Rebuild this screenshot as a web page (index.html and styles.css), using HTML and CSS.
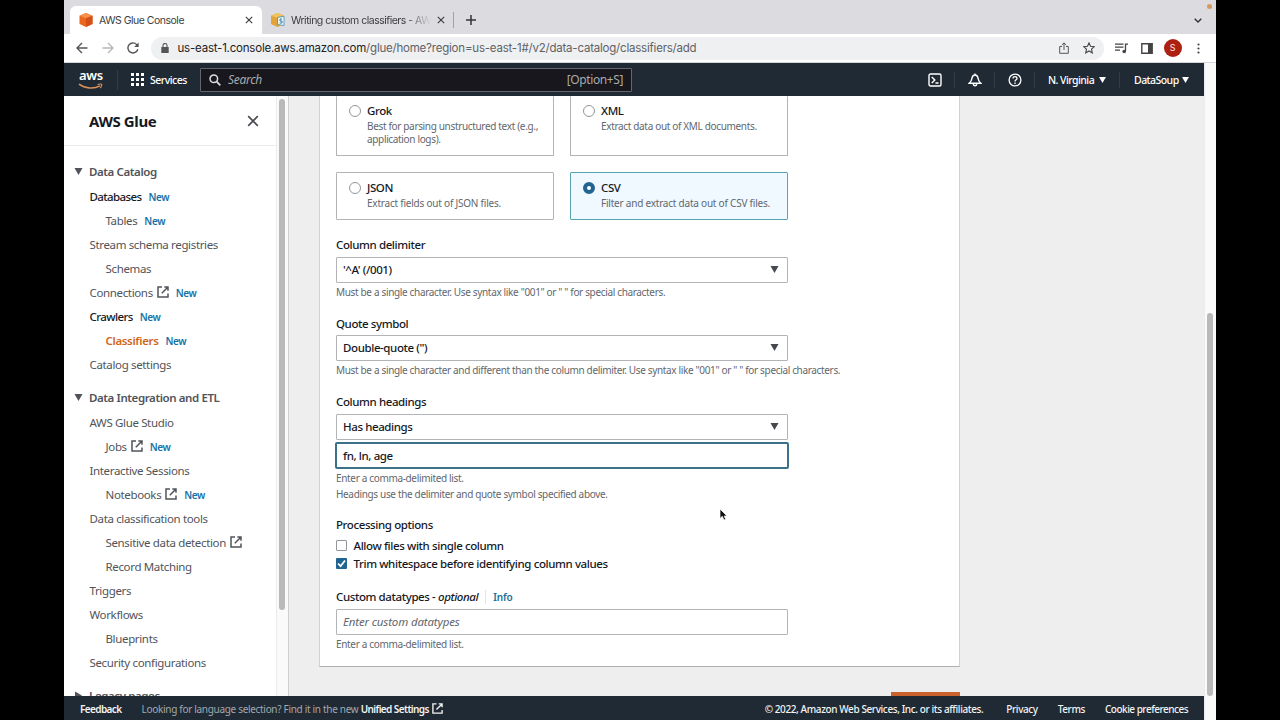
FILE: index.html
```html
<!DOCTYPE html>
<html lang="en">
<head>
    <meta charset="UTF-8">
    <meta name="viewport" content="width=device-width, initial-scale=1.0">
    <title>AWS Glue Console</title>
    <link rel="stylesheet" href="styles.css">
</head>
<body>

    <!-- shared icons -->
    <svg class="icon-defs">
        <symbol id="external" viewBox="0 0 12 12">
            <path d="M5 1H1v10h10V7.500M7.300 1H11v3.700M11 1L4.800 7.200" fill="none" stroke="currentColor" stroke-width="1.500"/>
        </symbol>
        <symbol id="close" viewBox="0 0 10 10">
            <path d="M1 1l8 8M9 1L1 9" fill="none" stroke="currentColor" stroke-width="1.400"/>
        </symbol>
        <symbol id="caret" viewBox="0 0 8 7">
            <path d="M0 0h8L4 7z" fill="currentColor"/>
        </symbol>
    </svg>

    <div class="browser">
        <div class="tab-strip">
            <div class="tab tab-active">
                <svg class="favicon" viewBox="0 0 14 14"><path d="M7 0l6.500 2.800v8.200L7 14 .5 11V2.800z" fill="#e9681d"/><path d="M.5 2.800L7 0l6.500 2.800L7 5.200z" fill="#f6914a"/><path d="M7 5.200l6.500-2.400v8.200L7 14z" fill="#d4501a"/></svg>
                <span class="tab-title">AWS Glue Console</span>
                <svg class="tab-close"><use href="#close"/></svg>
            </div>
            <div class="tab">
                <svg class="favicon" viewBox="0 0 14 14"><path d="M6.500 0L13 2.500v8.500L6.500 14 0 11V2.800z" fill="#e3a338"/><path d="M0 2.800L6.500 0 13 2.500 6.500 5z" fill="#f2c25f"/><path d="M6.500 4.500L13 3.300v9.200l-6.500-1z" fill="#f3f7f8" stroke="#3b8fae" stroke-width=".8"/><path d="M11 6H9v2h2v2H8.600" fill="none" stroke="#2c83aa"/></svg>
                <span class="tab-title fade">Writing custom classifiers - AW</span>
                <svg class="tab-close"><use href="#close"/></svg>
            </div>
            <span class="tab-divider"></span>
            <svg class="new-tab" viewBox="0 0 10 10"><path d="M5 0v10M0 5h10" stroke="#333" stroke-width="1.500"/></svg>
            <svg class="tab-menu" viewBox="0 0 8 5"><path d="M.7.7L4 4 7.300.7" fill="none" stroke="#333" stroke-width="1.400"/></svg>
            <span class="recording-dot"></span>
        </div>

        <div class="toolbar">
            <svg class="nav-icon" viewBox="0 0 12 12"><path d="M11.500 6H1.500M6 1L1 6l5 5" fill="none" stroke="#555" stroke-width="1.400"/></svg>
            <svg class="nav-icon" viewBox="0 0 12 12"><path d="M.5 6h10M6 1l5 5-5 5" fill="none" stroke="#b5b6b8" stroke-width="1.300"/></svg>
            <svg class="nav-icon" viewBox="0 0 12 12"><path d="M10.800 7.200A5 5 0 1 1 9.700 2.600L11 4" fill="none" stroke="#555" stroke-width="1.400"/><path d="M11.600.6v4.400H7.200z" fill="#555"/></svg>
            <div class="address">
                <svg class="lock" viewBox="0 0 8 10"><path d="M.3 4h7.400v6H.3z" fill="#555"/><path d="M2 4V2.500a2 2 0 0 1 4 0V4" fill="none" stroke="#555" stroke-width="1.100"/></svg>
                <span class="url"><b>us-east-1.console.aws.amazon.com</b>/glue/home?region=us-east-1#/v2/data-catalog/classifiers/add</span>
                <svg class="share" viewBox="0 0 10 12"><path d="M3 4.500H.7v6.800h8.600V4.500H7M5 8V1M2.800 3L5 .9 7.200 3" fill="none" stroke="#555"/></svg>
                <svg class="star" viewBox="0 0 12 12"><path d="M6 .9l1.500 3.400 3.800.4-2.800 2.500.8 3.700L6 9l-3.300 1.900.8-3.700L.7 4.700l3.800-.4z" fill="none" stroke="#444" stroke-width="1.100"/></svg>
            </div>
            <svg class="playlist" viewBox="0 0 13 11"><path d="M0 1.200h8.500M0 4.200h8.500M0 7.200h5M10.500 8V1.200H13" fill="none" stroke="#444" stroke-width="1.300"/><circle cx="9.200" cy="8.500" r="1.800" fill="#444"/></svg>
            <svg class="panel-icon" viewBox="0 0 12 11"><path d="M.8.8h10.400v9.400H.8z" fill="none" stroke="#444" stroke-width="1.400"/><path d="M7 1h4v9H7z" fill="#444"/></svg>
            <span class="avatar">S</span>
            <svg class="kebab" viewBox="0 0 3 11"><circle cx="1.500" cy="1.500" r="1.100" fill="#444"/><circle cx="1.500" cy="5.500" r="1.100" fill="#444"/><circle cx="1.500" cy="9.500" r="1.100" fill="#444"/></svg>
        </div>

        <div class="viewport">
            <div class="page">
                <header class="aws-nav">
                    <div class="aws-logo">
                        <span>aws</span>
                        <svg viewBox="0 0 25 7"><path d="M1 1.200C7 5.800 16 6.200 22 2.800" fill="none" stroke="#d9935c" stroke-width="1.500"/><path d="M19.500 1.500c2-.8 4.500-.7 4.300.2s-.6 2.500-1.500 3.500" fill="none" stroke="#d9935c" stroke-width="1.100"/></svg>
                    </div>
                    <div class="services">
                        <svg viewBox="0 0 13 13" fill="#fff"><path d="M0 0h3v3H0zM5 0h3v3H5zM10 0h3v3h-3zM0 5h3v3H0zM5 5h3v3H5zM10 5h3v3h-3zM0 10h3v3H0zM5 10h3v3H5zM10 10h3v3h-3z"/></svg>
                        <span>Services</span>
                    </div>
                    <div class="search">
                        <svg viewBox="0 0 12 12"><circle cx="4.800" cy="4.800" r="3.800" fill="none" stroke="#ddd" stroke-width="1.500"/><path d="M7.700 7.700l3.600 3.600" stroke="#ddd" stroke-width="1.700"/></svg>
                        <i>Search</i>
                        <span>[Option+S]</span>
                    </div>
                    <div class="nav-tools">
                        <div class="tool"><svg viewBox="0 0 14 14" fill="none" stroke="#fff" stroke-width="1.400"><rect x="1" y="1" width="12" height="12" rx="1.500"/><path d="M3.800 4l3 3-3 3M7.500 10h3"/></svg></div>
                        <div class="tool"><svg viewBox="0 0 14 14" fill="none" stroke="#fff" stroke-width="1.400"><path d="M1.200 10.300C3 8.800 3.700 7.500 4 5.200 4.300 3 5.500 2 7 2s2.700 1 3 3.200c.3 2.300 1 3.600 2.800 5.100zM7 2V.5M5.300 10.500c0 3 3.400 3 3.400 0"/></svg></div>
                        <div class="tool"><svg viewBox="0 0 14 14" fill="none" stroke="#fff" stroke-width="1.300"><circle cx="7" cy="7" r="5.900"/><path d="M5 5.600c0-2.700 4-2.500 4-.2C9 6.800 7 6.600 7 8.500M7 9.500v1.400"/></svg></div>
                        <div class="menu region">N. Virginia <svg><use href="#caret"/></svg></div>
                        <div class="menu account">DataSoup <svg><use href="#caret"/></svg></div>
                    </div>
                </header>

                <div class="content">
                    <nav class="sidebar">
                        <div class="sidebar-head">
                            <h2>AWS Glue</h2>
                            <svg><use href="#close"/></svg>
                        </div>
                        <div class="group">
                            <h3><svg><use href="#caret"/></svg>Data Catalog</h3>
                            <a class="strong">Databases <em>New</em></a>
                            <a class="sub">Tables <em>New</em></a>
                            <a>Stream schema registries</a>
                            <a class="sub">Schemas</a>
                            <a>Connections <svg><use href="#external"/></svg> <em>New</em></a>
                            <a class="strong">Crawlers <em>New</em></a>
                            <a class="sub current">Classifiers <em>New</em></a>
                            <a>Catalog settings</a>
                        </div>
                        <div class="group">
                            <h3><svg><use href="#caret"/></svg>Data Integration and ETL</h3>
                            <a>AWS Glue Studio</a>
                            <a class="sub">Jobs <svg><use href="#external"/></svg> <em>New</em></a>
                            <a>Interactive Sessions</a>
                            <a class="sub">Notebooks <svg><use href="#external"/></svg> <em>New</em></a>
                            <a>Data classification tools</a>
                            <a class="sub">Sensitive data detection <svg><use href="#external"/></svg></a>
                            <a class="sub">Record Matching</a>
                            <a>Triggers</a>
                            <a>Workflows</a>
                            <a class="sub">Blueprints</a>
                            <a>Security configurations</a>
                        </div>
                        <div class="group">
                            <h3 class="collapsed"><svg><use href="#caret"/></svg>Legacy pages</h3>
                        </div>
                    </nav>
                    <div class="sidebar-scroll"><span class="thumb"></span></div>

                    <main class="main">
                        <section class="card">
                            <div class="tiles">
                                <div class="tile cut">
                                    <span class="radio"></span>
                                    <div><b>Grok</b><p>Best for parsing unstructured text (e.g.,<br>application logs).</p></div>
                                </div>
                                <div class="tile cut">
                                    <span class="radio"></span>
                                    <div><b>XML</b><p>Extract data out of XML documents.</p></div>
                                </div>
                                <div class="tile">
                                    <span class="radio"></span>
                                    <div><b>JSON</b><p>Extract fields out of JSON files.</p></div>
                                </div>
                                <div class="tile selected">
                                    <span class="radio"></span>
                                    <div><b>CSV</b><p>Filter and extract data out of CSV files.</p></div>
                                </div>
                            </div>

                            <div class="field">
                                <label>Column delimiter</label>
                                <div class="select"><span>'^A' (/001)</span><svg><use href="#caret"/></svg></div>
                                <p class="hint">Must be a single character. Use syntax like "001" or " " for special characters.</p>
                            </div>
                            <div class="field">
                                <label>Quote symbol</label>
                                <div class="select"><span>Double-quote (")</span><svg><use href="#caret"/></svg></div>
                                <p class="hint">Must be a single character and different than the column delimiter. Use syntax like "001" or " " for special characters.</p>
                            </div>
                            <div class="field headings">
                                <label>Column headings</label>
                                <div class="select"><span>Has headings</span><svg><use href="#caret"/></svg></div>
                                <div class="select focused">fn, ln, age</div>
                                <p class="hint">Enter a comma-delimited list.</p>
                                <p class="hint">Headings use the delimiter and quote symbol specified above.</p>
                            </div>
                            <div class="field options">
                                <label>Processing options</label>
                                <div class="check"><span class="box"></span>Allow files with single column</div>
                                <div class="check"><span class="box checked"><svg viewBox="0 0 11 11"><path d="M2 5.500l2.600 2.600L9 2.500" fill="none" stroke="#fff" stroke-width="1.700"/></svg></span>Trim whitespace before identifying column values</div>
                            </div>
                            <div class="field">
                                <label>Custom datatypes - <i>optional</i><span class="info">Info</span></label>
                                <div class="select"><i class="placeholder">Enter custom datatypes</i></div>
                                <p class="hint">Enter a comma-delimited list.</p>
                            </div>
                        </section>
                        <div class="actions"><span class="primary"></span></div>
                    </main>
                </div>

                <footer class="aws-footer">
                    <b class="feedback">Feedback</b>
                    <span class="language">Looking for language selection? Find it in the new <b>Unified Settings</b></span>
                    <svg><use href="#external"/></svg>
                    <span class="copyright">© 2022, Amazon Web Services, Inc. or its affiliates.</span>
                    <span class="privacy">Privacy</span>
                    <span class="terms">Terms</span>
                    <span class="cookies">Cookie preferences</span>
                </footer>
            </div>
            <div class="page-scroll"><span class="thumb"></span></div>
        </div>

        <svg class="cursor" viewBox="0 0 9 13"><path d="M1 1v9.500l2.300-2.200L5 12l1.700-.8L5.200 8H8z" fill="#111" stroke="#fff" stroke-width=".7"/></svg>
    </div>

</body>
</html>
```

FILE: styles.css
```css
* {
    box-sizing: border-box;
}

body {
    margin: 0;
    height: 720px;
    overflow: hidden;
    background-color: #000;
    font-family: "Noto Sans", "Open Sans", sans-serif;
    font-size: 11.5px;
    letter-spacing: -0.4px;
    color: #16191f;
}

h2, h3, p {
    margin: 0;
}

svg {
    flex: none;
    display: block;
}

.icon-defs {
    display: none;
}

.browser {
    position: relative;
    width: 1152px;
    height: 720px;
    margin-left: 64px;
    display: flex;
    flex-direction: column;
    background-color: #fff;
}

/* Browser tabs */
.tab-strip {
    position: relative;
    height: 34px;
    padding: 6px 14px 0 6px;
    display: flex;
    align-items: center;
    background-color: #dcdbe0;
    font-family: Inter, sans-serif;
    font-size: 10.5px;
    letter-spacing: -0.5px;
    color: #3c3d40;
}

.tab {
    width: 192px;
    height: 28px;
    padding: 0 9px 0 9px;
    display: flex;
    align-items: center;
    gap: 6px;
}

.tab-active {
    background-color: #fff;
    border-radius: 6px 6px 0 0;
}

.favicon {
    width: 14px;
    height: 14px;
}

.tab-title {
    flex: 1;
    overflow: hidden;
    white-space: nowrap;
}

.fade {
    -webkit-mask-image: linear-gradient(to right, #000 82%, transparent 100%);
    mask-image: linear-gradient(to right, #000 82%, transparent 100%);
}

.tab-close {
    width: 8px;
    height: 8px;
}

.tab-divider {
    width: 1px;
    height: 16px;
    margin-left: -1px;
    background-color: #a2a2a6;
}

.new-tab {
    width: 10px;
    height: 10px;
    margin-left: 12px;
}

.tab-menu {
    width: 8px;
    height: 5px;
    margin-left: auto;
}

.recording-dot {
    position: absolute;
    top: 4px;
    right: 4px;
    width: 5px;
    height: 5px;
    border-radius: 50%;
    background-color: #d59a60;
}

/* Browser toolbar */
.toolbar {
    height: 29px;
    padding: 0 16px 0 12px;
    display: flex;
    align-items: center;
    border-bottom: 1px solid #d5d6d8;
}

.nav-icon {
    width: 12px;
    height: 12px;
    margin-right: 13.5px;
}

.address {
    width: 953px;
    height: 23px;
    margin-left: -2px;
    padding: 0 9px 0 10px;
    display: flex;
    align-items: center;
    border-radius: 12px;
    background-color: #eff0f2;
    font-family: Inter, sans-serif;
    font-size: 11.5px;
    letter-spacing: -0.21px;
    color: #606266;
}

.lock {
    width: 8px;
    height: 10px;
    margin-right: 9px;
}

.url {
    flex: 1;
    white-space: nowrap;
}

.url b {
    font-weight: 400;
    color: #222;
}

.share {
    width: 10px;
    height: 12px;
    margin-right: 14px;
}

.star {
    width: 12px;
    height: 12px;
}

.playlist {
    width: 13px;
    height: 11px;
    margin-left: 11px;
}

.panel-icon {
    width: 12px;
    height: 11px;
    margin-left: 13px;
}

.avatar {
    width: 18px;
    height: 18px;
    margin-left: 11px;
    border-radius: 50%;
    background-color: #ae2012;
    color: #fbe6e2;
    font: 9px/18px Inter, sans-serif;
    text-align: center;
}

.kebab {
    width: 3px;
    height: 11px;
    margin-left: auto;
}

.viewport {
    flex: 1;
    display: flex;
    min-height: 0;
}

.page {
    width: 1140px;
    display: flex;
    flex-direction: column;
}

.page-scroll {
    width: 12px;
    background-color: #fafafa;
    border-left: 1px solid #ececec;
}

.page-scroll .thumb {
    display: block;
    width: 6px;
    height: 383px;
    margin: 250px 0 0 2px;
    border-radius: 3px;
    background-color: #b9b9bc;
}

/* AWS top navigation */
.aws-nav {
    height: 33px;
    display: flex;
    align-items: center;
    background-color: #202a34;
    color: #fff;
    font-size: 10.5px;
    font-weight: 500;
}

.aws-logo {
    width: 54px;
    height: 20px;
    padding-left: 14px;
    border-right: 1px solid #323c47;
}

.aws-logo span {
    display: block;
    height: 13px;
    padding-left: 1px;
    font-size: 13px;
    font-weight: 600;
    line-height: 11px;
    letter-spacing: -0.3px;
}

.aws-logo svg {
    width: 25px;
    height: 7px;
}

.services {
    width: 82px;
    padding-left: 13px;
    display: flex;
    align-items: center;
    gap: 6px;
    letter-spacing: -0.5px;
}

.services svg {
    width: 13px;
    height: 13px;
}

.search {
    width: 432px;
    height: 24px;
    padding: 0 8px 0 8px;
    display: flex;
    align-items: center;
    border: 1px solid #63676c;
    border-radius: 1px;
    background-color: #17171d;
    color: #a9abad;
    font-size: 12px;
    font-weight: 400;
}

.search svg {
    width: 12px;
    height: 12px;
    margin-right: 7px;
}

.search i {
    letter-spacing: -0.3px;
}

.search span {
    margin-left: auto;
}

.nav-tools {
    margin-left: auto;
    display: flex;
    align-items: center;
}

.tool {
    width: 40px;
    height: 16px;
    display: flex;
    align-items: center;
    justify-content: center;
    border-right: 1px solid #323c47;
}

.tool svg {
    width: 14px;
    height: 14px;
}

.menu {
    height: 16px;
    display: flex;
    align-items: center;
    justify-content: space-between;
    letter-spacing: -0.55px;
    white-space: nowrap;
}

.menu svg {
    width: 7px;
    height: 6px;
}

.region {
    width: 85px;
    padding: 0 13px 0 13px;
    border-right: 1px solid #323c47;
}

.account {
    width: 84px;
    padding: 0 15px 0 14px;
}

.content {
    height: 600px;
    display: flex;
    overflow: hidden;
}

/* Sidebar */
.sidebar {
    width: 213px;
    background-color: #fff;
    border-right: 1px solid #ececec;
}

.sidebar-head {
    height: 50px;
    padding: 0 17px 0 25px;
    display: flex;
    align-items: center;
    justify-content: space-between;
    border-bottom: 1px solid #eaeaec;
}

.sidebar-head h2 {
    font-size: 15px;
    font-weight: 700;
}

.sidebar-head svg {
    width: 12px;
    height: 12px;
    color: #4a4d52;
}

.group {
    padding-top: 9px;
    color: #50545a;
}

.sidebar-head + .group {
    padding-top: 13px;
}

.group h3 {
    height: 25px;
    padding-left: 10px;
    display: flex;
    align-items: center;
    gap: 6px;
    font-size: 11.5px;
    font-weight: 600;
}

.group h3 svg {
    width: 9px;
    height: 7px;
}

.group .collapsed svg {
    transform: rotate(-90deg);
}

.group a {
    height: 24px;
    padding-left: 25.5px;
    display: flex;
    align-items: center;
    letter-spacing: -0.35px;
    white-space: nowrap;
}

.group .sub {
    padding-left: 41.5px;
}

.group .strong {
    font-weight: 500;
    letter-spacing: -0.6px;
    color: #16191f;
}

.group .current {
    font-weight: 600;
    color: #d0651d;
}

.group em {
    margin: 1px 0 0 7px;
    font-size: 10px;
    font-style: normal;
    font-weight: 600;
    letter-spacing: -0.4px;
    color: #1673a8;
}

.group a svg {
    width: 12px;
    height: 12px;
    margin-left: 4px;
}

.sidebar-scroll {
    width: 12px;
    background-color: #fafafa;
    border-right: 1px solid #cfcfd2;
}

.sidebar-scroll .thumb {
    display: block;
    width: 6px;
    height: 511px;
    margin: 3px 0 0 2px;
    border-radius: 3px;
    background-color: #b9b9bc;
}

/* Classifier form */
.main {
    flex: 1;
    padding-left: 30px;
    background-color: #eeeeef;
}

.card {
    width: 641px;
    height: 571px;
    padding: 0 16px;
    border: 1px solid #d2d2d4;
    border-top: none;
    border-bottom-color: #b0b0b3;
    background-color: #fff;
}

.tiles {
    width: 452px;
    display: grid;
    grid-template-columns: 218px 218px;
    grid-template-rows: 60px 48px;
    gap: 16px;
    margin-bottom: 16.5px;
}

.tile {
    padding: 7px 0 0 12px;
    display: flex;
    gap: 6px;
    border: 1px solid #b2b5b8;
    border-radius: 1px;
}

.cut {
    border-top: none;
}

.selected {
    border-color: #55a4af;
    background-color: #eff9ff;
}

.tile b {
    display: block;
    font-weight: 500;
    line-height: 16px;
}

.tile p {
    margin-top: 1px;
    font-size: 10px;
    line-height: 13px;
    letter-spacing: -0.34px;
    color: #62676d;
    white-space: nowrap;
}

.tile:nth-child(n+3) p {
    letter-spacing: -0.22px;
}

.radio {
    width: 12px;
    height: 12px;
    margin-top: 2px;
    border: 1px solid #92979b;
    border-radius: 50%;
    background-color: #fff;
}

.selected .radio {
    border: 4px solid #216391;
}

.field {
    width: 452px;
    margin-bottom: 14.5px;
    font-weight: 500;
}

.headings {
    margin-bottom: 13.5px;
}

.options {
    margin-bottom: 16.5px;
}

.field label {
    height: 16px;
    margin-bottom: 4px;
    display: flex;
    align-items: center;
    white-space: pre;
}

.select {
    height: 26px;
    padding: 0 8px 1px 6px;
    display: flex;
    align-items: center;
    justify-content: space-between;
    border: 1px solid #b2b5b8;
    border-radius: 1px;
}

.select svg {
    width: 9px;
    height: 7px;
    color: #45484c;
}

.focused {
    height: 27px;
    margin: 2px -1px 0;
    padding-bottom: 0;
    border: 2px solid #3c7289;
    border-radius: 2px;
}

.hint {
    height: 16px;
    margin-top: 2px;
    font-size: 10px;
    font-weight: 400;
    line-height: 15px;
    letter-spacing: -0.34px;
    color: #62676d;
    white-space: nowrap;
}

.hint + .hint {
    margin-top: 0;
}

.check {
    height: 18px;
    display: flex;
    align-items: center;
    gap: 6.5px;
}

.box {
    width: 11px;
    height: 11px;
    border: 1px solid #92979b;
    border-radius: 1px;
}

.checked {
    border: none;
    background-color: #216391;
}

.info {
    margin-left: 7px;
    padding-left: 7px;
    border-left: 1px solid #e4e4e6;
    font-size: 10px;
    font-weight: 600;
    letter-spacing: -0.2px;
    color: #1f6f93;
}

.placeholder {
    font-weight: 400;
    letter-spacing: -0.15px;
    color: #62676d;
}

.actions {
    width: 641px;
    padding-top: 25px;
    display: flex;
    justify-content: flex-end;
}

.primary {
    width: 69px;
    height: 26px;
    background-color: #c9622c;
}

/* Footer */
.aws-footer {
    height: 24px;
    padding: 1px 16px 0;
    display: flex;
    align-items: center;
    background-color: #202a34;
    color: #f2f3f3;
    font-size: 10px;
    font-weight: 500;
    letter-spacing: -0.4px;
    white-space: nowrap;
}

.aws-footer b {
    font-weight: 600;
    letter-spacing: -0.6px;
    color: #f2f3f3;
}

.language {
    margin-left: 20px;
    font-weight: 400;
    letter-spacing: -0.31px;
    color: #a4a8ac;
}

.aws-footer svg {
    width: 11px;
    height: 11px;
    margin-left: 3px;
}

.copyright {
    margin-left: auto;
}

.privacy {
    margin-left: 23px;
}

.terms {
    margin-left: 20px;
}

.cookies {
    margin-left: 20px;
    letter-spacing: -0.5px;
}

.cursor {
    position: absolute;
    left: 655px;
    top: 508px;
    width: 9px;
    height: 13px;
}
```
